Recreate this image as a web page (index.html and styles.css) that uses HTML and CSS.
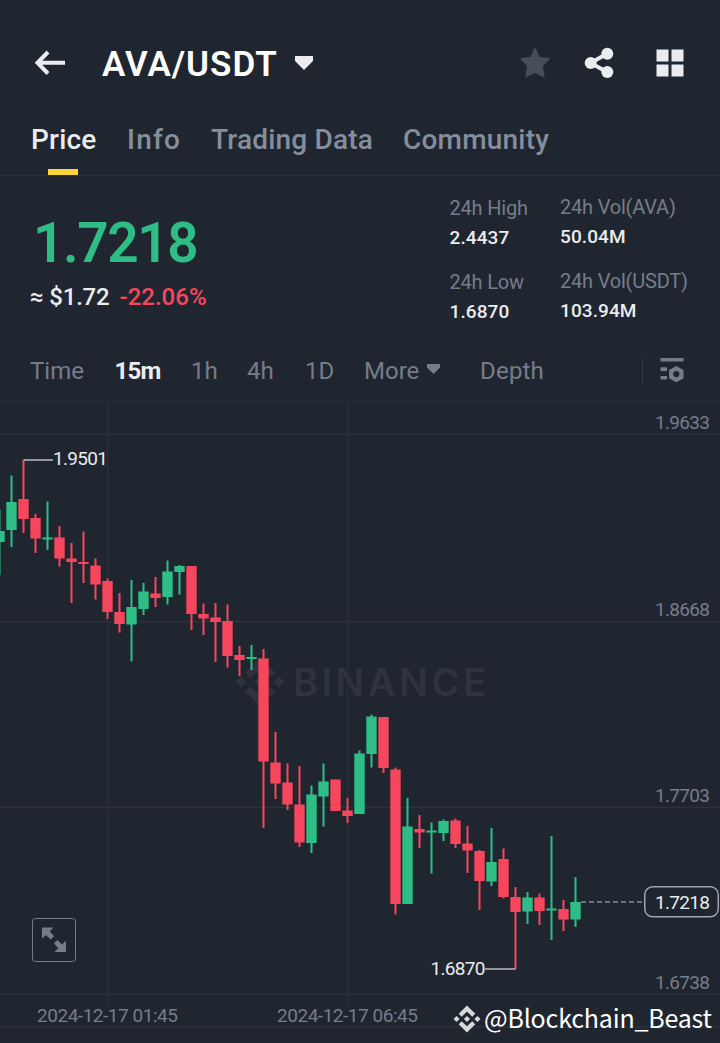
FILE: index.html
```html
<!DOCTYPE html>
<html lang="en">

<head>
    <meta charset="UTF-8">
    <meta name="viewport" content="width=device-width, initial-scale=1.0">
    <title>AVA/USDT</title>
    <link rel="stylesheet" href="styles.css">
</head>

<body>
    <header class="header">
        <svg class="back" width="32" height="26" viewBox="0 0 32 26">
            <path d="M14 2 3.5 12.8 14 23.5M3.5 12.8H31" />
        </svg>
        <h1 class="pair">AVA/USDT</h1>
        <svg class="caret" width="18" height="14" viewBox="0 0 18 14">
            <path d="M0 0h18v5L9 14 0 5z" />
        </svg>
        <div class="actions">
            <svg width="32" height="32" viewBox="0 0 32 32">
                <path class="star" d="M16 2.2l4 8.6 9.6 1.3-6.7 6.5 1.7 10.6L16 24.8l-8.6 4.4 1.7-10.6L2.4 12.1l9.6-1.3z" />
            </svg>
            <svg width="30" height="32" viewBox="0 0 30 32">
                <path class="share-line" d="M23 6.7 6.5 16 23 25" />
                <circle cx="23.3" cy="6.7" r="6" />
                <circle cx="6.7" cy="16" r="6" />
                <circle cx="23.3" cy="25" r="6" />
            </svg>
            <svg width="28" height="28" viewBox="0 0 28 28">
                <path d="M.5.5h12v12H.5zM15.5.5h12v12h-12zM.5 15.5h12v12H.5zM15.5 15.5h12v12h-12z" />
            </svg>
        </div>
    </header>

    <nav class="tabs">
        <div class="tab active">Price</div>
        <div class="tab info">Info</div>
        <div class="tab">Trading Data</div>
        <div class="tab">Community</div>
    </nav>

    <section class="summary">
        <div class="quote">
            <div class="last-price">1.7218</div>
            <div class="converted">≈ $1.72<span class="change">-22.06%</span></div>
        </div>
        <dl class="stats">
            <dt>24h High</dt>
            <dd>2.4437</dd>
            <dt>24h Low</dt>
            <dd>1.6870</dd>
        </dl>
        <dl class="stats volume">
            <dt>24h Vol(AVA)</dt>
            <dd>50.04M</dd>
            <dt>24h Vol(USDT)</dt>
            <dd>103.94M</dd>
        </dl>
    </section>

    <div class="periods">
        <span>Time</span>
        <span class="selected">15m</span>
        <span>1h</span>
        <span>4h</span>
        <span>1D</span>
        <span>More<svg class="more-caret" width="13" height="10" viewBox="0 0 13 10"><path d="M0 0h13v3.5L6.5 10 0 3.5z" /></svg></span>
        <span class="depth">Depth</span>
        <div class="settings">
            <svg width="24" height="26" viewBox="0 0 24 26">
                <path d="M.5 0h23v3.5H.5zM.5 9.3H7v3.600H.5zM.5 18H7v3.6H.5z" />
                <path fill-rule="evenodd" d="M16.3 8l7.2 4v8.2l-7.2 4-7.2-4V12zM16.3 13a3.1 3.1 0 1 0 0 6.2 3.1 3.1 0 0 0 0-6.2z" />
            </svg>
        </div>
    </div>

    <svg class="chart" width="720" height="642" viewBox="0 401 720 642">
        <defs>
            <path id="logo" d="M38.73 53.2 63.3 28.63 87.9 53.22 102.2 38.9 63.3 0 24.42 38.9zM0 63.31 14.3 49 28.61 63.31 14.3 77.61zM38.73 73.41 63.3 98 87.9 73.4 102.21 87.69 63.3 126.61 24.42 87.72zM98 63.31 112.3 49 126.61 63.3 112.3 77.62zM77.83 63.3 63.3 48.78 48.77 63.31 63.31 77.83z" />
        </defs>
        <g class="watermark">
            <use href="#logo" transform="translate(235.5 657.5) scale(.387)" />
            <text x="293" y="695.5" textLength="193">BINANCE</text>
        </g>
        <path class="grid" d="M0 401H720M0 434.500H720M0 621.500H720M0 807.500H720M0 994.500H720M0 1027H720M107.500 401V1005M347.500 401V1005" />
        <g id="candles"></g>

        <path class="marker" d="M23.5 460H53M485 969H515.5" />
        <g class="marker-text">
            <text x="53" y="464.5" textLength="55">1.9501</text>
            <text x="430.5" y="974.5" textLength="55">1.6870</text>
        </g>

        <g class="axis">
            <text x="655" y="429" textLength="55">1.9633</text>
            <text x="655" y="615.5" textLength="55">1.8668</text>
            <text x="655" y="802" textLength="55">1.7703</text>
            <text x="655" y="989" textLength="55">1.6738</text>
            <text x="37" y="1021.5" textLength="141">2024-12-17 01:45</text>
            <text x="277" y="1021.5" textLength="141">2024-12-17 06:45</text>
        </g>

        <path class="current-line" d="M581 902H643" />
        <rect class="current-box" x="644.75" y="886.75" width="73.5" height="30" rx="8" />
        <text class="current-text" x="655" y="909" textLength="55">1.7218</text>

        <g class="fullscreen">
            <rect x="32.5" y="918.5" width="43" height="43" rx="3" />
            <path d="M42 927.5h11.500l-3.700 3.700 4.200 5.100-3.200 3.200-5-4.600-3.800 3.800zM66 952H54.500l3.700-3.700-4.200-5.100 3.200-3.200 5 4.600 3.800-3.800z" />
        </g>

        <g class="author">
            <use href="#logo" transform="translate(453.5 1005.5) scale(.213)" />
            <text x="484" y="1028" textLength="228">@Blockchain_Beast</text>
        </g>
    </svg>

    <script src="script.js"></script>
</body>

</html>
```
FILE: styles.css
```css
* {
    box-sizing: border-box;
}

body {
    margin: 0;
    width: 720px;
    height: 1043px;
    overflow: hidden;
    background-color: #202630;
    color: #eaecef;
    font-family: Roboto, sans-serif;
}

svg {
    display: block;
    fill: #eaecef;
}

.header {
    display: flex;
    align-items: center;
    height: 129px;
    padding: 0 36px 0 34px;
}

.back {
    fill: none;
    stroke: #eaecef;
    stroke-width: 4;
    margin-top: -4px;
}

.pair {
    margin: 0 0 0 36px;
    width: 193px;
    font-size: 35px;
    font-weight: 600;
    letter-spacing: 1px;
    color: #fff;
}

.caret {
    margin-top: -4px;
}

.actions {
    display: flex;
    align-items: center;
    margin: -3px 0 0 auto;
}

.actions svg + svg {
    margin-left: 33px;
}

.actions svg:last-child {
    margin-left: 42px;
}

.star {
    fill: #474d59;
    stroke: #474d59;
    stroke-width: 2;
    stroke-linejoin: round;
}

.share-line {
    fill: none;
    stroke: #eaecef;
    stroke-width: 4;
}

.tabs {
    display: grid;
    grid-template-columns: 96px 84px 192px auto;
    height: 47px;
    padding-left: 31px;
    border-bottom: 1px solid #2b313b;
    color: #848e9c;
    font-size: 28px;
    font-weight: 500;
    line-height: 22px;
    letter-spacing: 0.2px;
    white-space: nowrap;
}

.active {
    color: #eaecef;
}

.active::after {
    content: "";
    display: block;
    width: 30px;
    height: 6px;
    margin: 18px 0 0 17px;
    background-color: #fcd535;
}

.info {
    letter-spacing: 1.2px;
}

.summary {
    display: grid;
    grid-template-columns: 419.5px 110.5px auto;
    height: 165px;
    padding-left: 30px;
}

.last-price {
    margin: 39px 0 0 3px;
    color: #2ebd85;
    font-size: 55px;
    font-weight: 600;
    line-height: 56px;
    letter-spacing: -1.4px;
}

.converted {
    margin-top: 11px;
    font-size: 24px;
    font-weight: 500;
    line-height: 30px;
    letter-spacing: -0.2px;
}

.change {
    margin-left: 10px;
    letter-spacing: 0;
}

.change {
    color: #f6465d;
}

.stats {
    margin: 18px 0 0;
    line-height: 29px;
    white-space: nowrap;
}

.stats dt {
    color: #767d8a;
    font-size: 20px;
    letter-spacing: -0.2px;
}

.stats dd {
    margin: 0 0 16px;
    font-size: 19px;
    font-weight: 500;
    letter-spacing: 0.1px;
}

.volume {
    margin-top: 17px;
}

.periods {
    display: grid;
    grid-template-columns: 84.5px 76.5px 56px 58px 59px 116px 162px auto;
    align-items: center;
    height: 60px;
    padding-left: 30px;
    color: #767d8a;
    font-size: 24px;
}

.periods svg {
    fill: #767d8a;
}

.selected {
    color: #eaecef;
    font-weight: 700;
    letter-spacing: -0.8px;
}

.more-caret {
    display: inline-block;
    margin-left: 8px;
    vertical-align: 5px;
}

.depth {
    letter-spacing: 0.2px;
}

.settings {
    padding-left: 17px;
    border-left: 1px solid #343a45;
}

.chart text {
    font-size: 19px;
}

.grid {
    fill: none;
    stroke: #2c323d;
    stroke-width: 1.3;
}

.watermark {
    fill: #2e333e;
}

.chart .watermark text {
    font-family: Inter, sans-serif;
    font-size: 38px;
    font-weight: 600;
}

.up {
    fill: #2ebd85;
}

.down {
    fill: #f6465d;
}

.marker {
    stroke: #b7bcc5;
    stroke-width: 1.3;
}

.marker-text,
.current-text {
    fill: #eaecef;
}

.axis {
    fill: #767d8a;
}

.current-line {
    stroke: #848e9c;
    stroke-width: 1.5;
    stroke-dasharray: 5 3;
}

.current-box {
    fill: #202630;
    stroke: #a0a6b0;
    stroke-width: 1.5;
}

.fullscreen {
    fill: #767d8a;
}

.fullscreen rect {
    fill: none;
    stroke: #767d8a;
}

.author {
    fill: #d8d8d8;
}

.chart .author text {
    fill: #fff;
    font-family: "Noto Sans CJK SC", sans-serif;
    font-size: 25px;
    font-weight: 400;
}
```
FILE: script.js
```javascript
// [direction, high, body top, body bottom, low]
const candles = [
    ["up", 510, 531, 542, 575],
    ["up", 475.5, 502, 530, 547],
    ["down", 460, 499, 519, 533],
    ["down", 514, 518, 538.5, 553],
    ["up", 501.5, 537.5, 539.5, 550],
    ["down", 526, 537.5, 558.5, 566.5],
    ["down", 543, 558.5, 562, 603],
    ["down", 531.5, 562, 564, 583],
    ["down", 558.5, 565.5, 584.5, 599.5],
    ["down", 578.5, 581, 612, 619],
    ["down", 593, 612, 624, 632.5],
    ["up", 580, 607, 624.5, 661.5],
    ["up", 583, 591.5, 609, 615],
    ["down", 577, 593.5, 598, 607],
    ["up", 560.5, 571.5, 597, 604.5],
    ["up", 565, 566, 572, 594.5],
    ["down", 566, 566, 614, 630],
    ["down", 603.5, 614, 618.5, 635],
    ["down", 603, 617.5, 622, 662],
    ["down", 604.5, 621, 656, 667.5],
    ["down", 646, 655, 660, 676],
    ["up", 645, 657, 659, 670],
    ["down", 649, 658.5, 761.5, 828],
    ["down", 732, 762.5, 783.5, 799],
    ["down", 763.5, 782.5, 804.5, 810],
    ["down", 766, 804.5, 842.5, 847],
    ["up", 785.5, 794.5, 843, 853],
    ["up", 763.5, 781.5, 796.5, 826.5],
    ["down", 779.5, 779.5, 811, 811],
    ["down", 798, 810.5, 816, 823],
    ["up", 750.5, 753.5, 814, 814],
    ["up", 714.5, 716.5, 754, 767.5],
    ["down", 717, 717, 768, 773],
    ["down", 767.5, 769.5, 904, 914.5],
    ["up", 798, 826.5, 904, 904],
    ["down", 815, 829, 832.5, 848],
    ["up", 822.5, 830.5, 832.5, 873.5],
    ["up", 819.5, 821, 833, 841],
    ["down", 818.5, 820.5, 844, 848],
    ["down", 826, 843.5, 850.5, 873],
    ["down", 850, 851, 881, 910],
    ["up", 828, 862, 881.5, 886],
    ["down", 848.5, 859, 897, 898.5],
    ["down", 887, 897, 912, 969],
    ["up", 892, 897.5, 911.5, 924],
    ["down", 893.5, 897.5, 911, 925],
    ["up", 836, 908.5, 910.5, 940],
    ["down", 900, 909, 919.5, 931],
    ["up", 877, 902, 919.5, 927]
];

const step = 12;
const bodyWidth = 10.4;
const wickWidth = 2;

document.getElementById("candles").innerHTML = candles.map(function (c, i) {
    const x = i * step - 0.5;
    return `<g class="${c[0]}">` +
        `<rect x="${x - wickWidth / 2}" y="${c[1]}" width="${wickWidth}" height="${c[4] - c[1]}" />` +
        `<rect x="${x - bodyWidth / 2}" y="${c[2]}" width="${bodyWidth}" height="${c[3] - c[2]}" />` +
        `</g>`;
}).join("");
```
